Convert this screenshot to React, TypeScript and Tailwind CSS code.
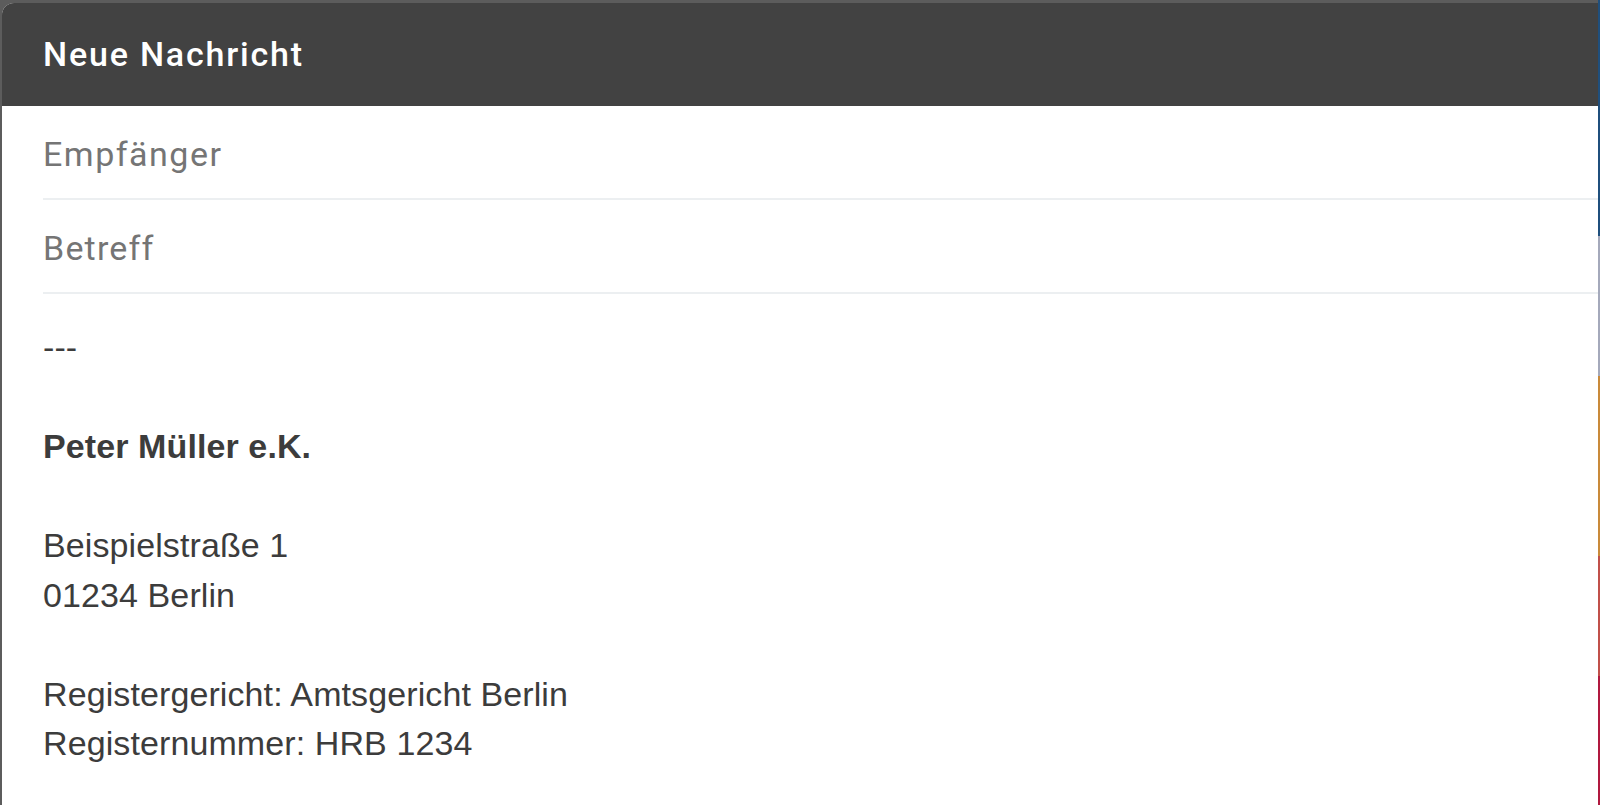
import React from 'react';

const BODY_LINES: { text: string; bold?: boolean }[] = [
  { text: '---' },
  { text: '' },
  { text: 'Peter Müller e.K.', bold: true },
  { text: '' },
  { text: 'Beispielstraße 1' },
  { text: '01234 Berlin' },
  { text: '' },
  { text: 'Registergericht: Amtsgericht Berlin' },
  { text: 'Registernummer: HRB 1234' },
];

export default function App() {
  return (
    <div className="flex h-[805px] w-full overflow-hidden bg-[#5c5c5c]">
      <div className="flex flex-1 flex-col pt-[3px] pl-[2px]">
        <div className="flex flex-1 flex-col overflow-hidden rounded-tl-[12px] bg-white">
          {/* Header */}
          <div className="flex h-[103px] shrink-0 items-center bg-[#424242] px-[41px]">
            <h1 className="font-['Roboto',sans-serif] text-[34px] font-medium tracking-[1.8px] text-white">
              Neue Nachricht
            </h1>
          </div>

          <div className="flex flex-1 flex-col pl-[41px]">
            <div className="flex h-[94px] items-center border-b-2 border-[#eceff1] pt-[4px]">
              <input
                placeholder="Empfänger"
                className="w-full bg-transparent font-['Roboto',sans-serif] text-[34px] tracking-[1.5px] text-[#333] outline-none placeholder:text-[#757575]"
              />
            </div>
            <div className="flex h-[94px] items-center border-b-2 border-[#eceff1] pt-[4px]">
              <input
                placeholder="Betreff"
                className="w-full bg-transparent font-['Roboto',sans-serif] text-[34px] tracking-[1.2px] text-[#333] outline-none placeholder:text-[#757575]"
              />
            </div>

            <div className="pt-[29px] font-['Liberation_Sans',Arial,sans-serif] text-[34px] leading-[49.5px] tracking-[0.1px] text-[#3c3c3c]">
              {BODY_LINES.map((line, i) => (
                <div key={i} className={line.bold ? 'font-bold' : ''}>
                  {line.text || '\u00a0'}
                </div>
              ))}
            </div>
          </div>
        </div>
      </div>

      {/* sliver of the window behind */}
      <div className="flex w-[2px] flex-col">
        <div className="h-[236px] bg-[#1f4f7d]" />
        <div className="h-[140px] bg-[#a4a9bb]" />
        <div className="h-[180px] bg-[#c98a3a]" />
        <div className="h-[120px] bg-[#c0504a]" />
        <div className="flex-1 bg-[#b0193f]" />
      </div>
    </div>
  );
}
